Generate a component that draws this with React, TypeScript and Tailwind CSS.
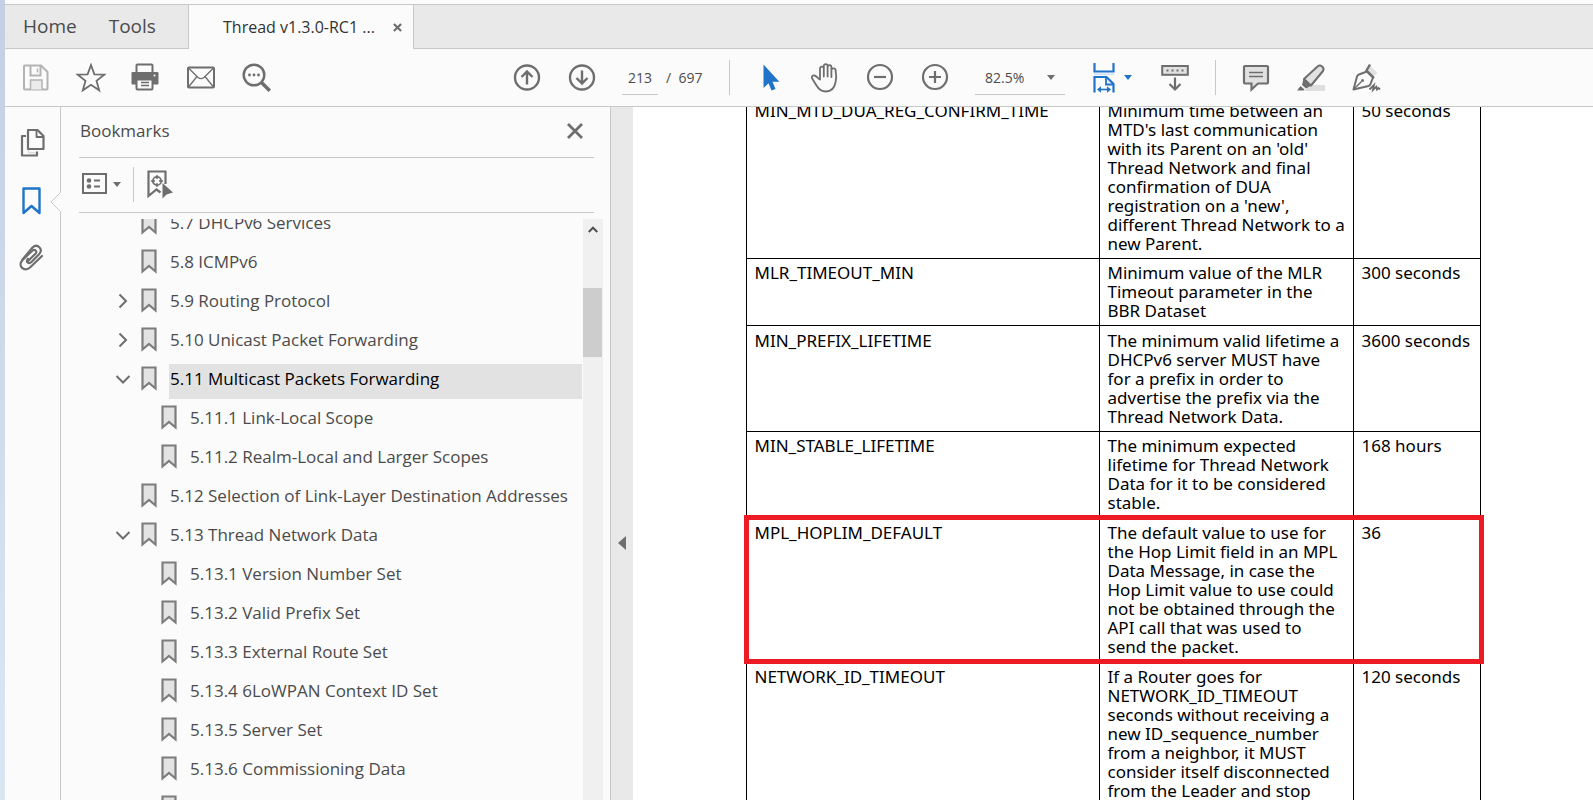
// PDF reader window: tab strip, main toolbar, bookmarks pane and one page of a spec table.

import type { ReactNode } from "react";

type Bookmark = {
  title: string;
  level: 1 | 2;
  state?: "open" | "closed";
  selected?: boolean;
};

const BOOKMARKS: Bookmark[] = [
  { title: "5.7 DHCPv6 Services", level: 1 },
  { title: "5.8 ICMPv6", level: 1 },
  { title: "5.9 Routing Protocol", level: 1, state: "closed" },
  { title: "5.10 Unicast Packet Forwarding", level: 1, state: "closed" },
  { title: "5.11 Multicast Packets Forwarding", level: 1, state: "open", selected: true },
  { title: "5.11.1 Link-Local Scope", level: 2 },
  { title: "5.11.2 Realm-Local and Larger Scopes", level: 2 },
  { title: "5.12 Selection of Link-Layer Destination Addresses", level: 1 },
  { title: "5.13 Thread Network Data", level: 1, state: "open" },
  { title: "5.13.1 Version Number Set", level: 2 },
  { title: "5.13.2 Valid Prefix Set", level: 2 },
  { title: "5.13.3 External Route Set", level: 2 },
  { title: "5.13.4 6LoWPAN Context ID Set", level: 2 },
  { title: "5.13.5 Server Set", level: 2 },
  { title: "5.13.6 Commissioning Data", level: 2 },
  { title: "", level: 2 },
];

type Constant = { name: string; text: string; value: string; marked?: boolean; roomy?: boolean };

// The descriptions keep the line breaks of the typeset page.
const CONSTANTS: Constant[] = [
  {
    name: "MIN_MTD_DUA_REG_CONFIRM_TIME",
    text: "Minimum time between an\nMTD's last communication\nwith its Parent on an 'old'\nThread Network and final\nconfirmation of DUA\nregistration on a 'new',\ndifferent Thread Network to a\nnew Parent.",
    value: "50 seconds",
  },
  {
    name: "MLR_TIMEOUT_MIN",
    text: "Minimum value of the MLR\nTimeout parameter in the\nBBR Dataset",
    value: "300 seconds",
  },
  {
    name: "MIN_PREFIX_LIFETIME",
    text: "The minimum valid lifetime a\nDHCPv6 server MUST have\nfor a prefix in order to\nadvertise the prefix via the\nThread Network Data.",
    value: "3600 seconds",
    roomy: true,
  },
  {
    name: "MIN_STABLE_LIFETIME",
    text: "The minimum expected\nlifetime for Thread Network\nData for it to be considered\nstable.",
    value: "168 hours",
  },
  {
    name: "MPL_HOPLIM_DEFAULT",
    text: "The default value to use for\nthe Hop Limit field in an MPL\nData Message, in case the\nHop Limit value to use could\nnot be obtained through the\nAPI call that was used to\nsend the packet.",
    value: "36",
    marked: true,
    roomy: true,
  },
  {
    name: "NETWORK_ID_TIMEOUT",
    text: "If a Router goes for\nNETWORK_ID_TIMEOUT\nseconds without receiving a\nnew ID_sequence_number\nfrom a neighbor, it MUST\nconsider itself disconnected\nfrom the Leader and stop",
    value: "120 seconds",
    roomy: true,
  },
];

function ToolButton({ label, children }: { label: string; children: ReactNode }) {
  return (
    <button type="button" aria-label={label} className="shrink-0 text-[#6e6e6e]">
      <svg width="30" height="30" viewBox="0 0 30 30" fill="none" stroke="currentColor" strokeWidth="2">
        {children}
      </svg>
    </button>
  );
}

function Divider() {
  return <div className="h-[35px] w-px shrink-0 bg-[#c8c8c8]" />;
}

function Caret({ className }: { className?: string }) {
  return (
    <svg width="8" height="5" viewBox="0 0 8 5" fill="currentColor" className={className}>
      <path d="M0 0h8L4 5z" />
    </svg>
  );
}

function TabStrip() {
  return (
    <div className="flex h-[45px] shrink-0 border-t border-[#c8c8c8] bg-[#e9e9e9] text-[#4b4b4b]">
      <div className="flex w-[183px] items-center gap-8 border-b border-[#c8c8c8] pl-[18px] text-[19px]">
        <button type="button">Home</button>
        <button type="button">Tools</button>
      </div>
      <div className="flex w-[226px] items-center justify-between border-x border-[#c8c8c8] bg-[#fbfbfb] pr-[11px] pl-[34px] text-base text-[#323232]">
        <button type="button" className="whitespace-nowrap">Thread v1.3.0-RC1 ...</button>
        <button type="button" aria-label="Close tab" className="text-[#6e6e6e]">
          <svg width="9" height="9" viewBox="0 0 10 10" stroke="currentColor" strokeWidth="2.400">
            <path d="M1 1l8 8M9 1L1 9" />
          </svg>
        </button>
      </div>
      <div className="flex-1 border-b border-[#c8c8c8]" />
    </div>
  );
}

function Toolbar() {
  return (
    <div className="flex h-[58px] shrink-0 items-center gap-[25px] border-b border-[#c8c8c8] bg-[#fbfbfb] pl-4 text-[#4b4b4b]">
      <ToolButton label="Save">
        <g stroke="#b3b3b3">
          <path d="M4 2.500h16l6.500 6.500v16.500a1 1 0 0 1-1 1H4a1 1 0 0 1-1-1v-22a1 1 0 0 1 1-1z" />
          <path d="M9.500 3v9.500h10V3" />
          <path d="M9.500 26.500V17h11.500v9.500" fill="#ececec" strokeWidth="1.500" />
          <path d="M16.500 5.500v4" strokeWidth="1.500" />
        </g>
      </ToolButton>
      <ToolButton label="Star">
        <path d="M15 2l3.400 9.300 9.900.4-7.800 6.100 2.700 9.500L15 21.800l-8.200 5.500 2.700-9.500-7.800-6.100 9.900-.4z" strokeWidth="1.800" />
      </ToolButton>
      <ToolButton label="Print">
        <path d="M5.500 10.500v-8a1 1 0 0 1 1-1h14a1 1 0 0 1 1 1v8" />
        <path d="M1.500 9h25a1 1 0 0 1 1 1v10.500a1 1 0 0 1-1 1h-25a1 1 0 0 1-1-1V10a1 1 0 0 1 1-1z" fill="currentColor" stroke="none" />
        <path d="M5.500 16.500h16v9a1 1 0 0 1-1 1h-14a1 1 0 0 1-1-1z" fill="#fbfbfb" />
        <path d="M10 19.500h8M10 22.500h8" strokeWidth="1.400" />
        <circle cx="23.500" cy="12.500" r="1" fill="#fbfbfb" stroke="none" />
      </ToolButton>
      <ToolButton label="Email">
        <rect x="2" y="4.500" width="26" height="20" rx="1" />
        <path d="M2.500 5L12 14.500q3 2.400 6 0L27.500 5M2.500 24L11 13.500M27.500 24L19 13.500" strokeWidth="1.300" />
      </ToolButton>
      <ToolButton label="Find text">
        <circle cx="13" cy="12" r="10.300" strokeWidth="2.400" />
        <path d="M20.500 19.500l8.300 8.300" strokeWidth="3.600" />
        <g fill="currentColor" stroke="none">
          <circle cx="8.500" cy="12" r="1.400" />
          <circle cx="13" cy="12" r="1.400" />
          <circle cx="17.500" cy="12" r="1.400" />
        </g>
      </ToolButton>

      <div className="ml-[216px] flex items-center gap-[25px]">
        <ToolButton label="Previous page">
          <circle cx="15" cy="14.500" r="12" strokeWidth="2.400" />
          <path d="M15 21.500V9M9.500 14L15 8.500l5.500 5.500" strokeWidth="2.400" />
        </ToolButton>
        <ToolButton label="Next page">
          <circle cx="15" cy="14.500" r="12" strokeWidth="2.400" />
          <path d="M15 7.500V20M9.500 15l5.500 5.500 5.500-5.500" strokeWidth="2.400" />
        </ToolButton>
        <div className="flex h-[35px] items-center text-[14px]">
          <input
            aria-label="Page number"
            defaultValue="213"
            className="h-full w-9 border-b border-[#c8c8c8] bg-transparent text-center outline-none"
          />
          <span className="w-[46px] pl-2 whitespace-pre">/  697</span>
        </div>
      </div>
      <Divider />
      <ToolButton label="Select">
        <path d="M8.500 1.500V25l5-4.800 3 7.300 4-1.600-3-7.200h6.800z" fill="#1f74c9" stroke="none" />
      </ToolButton>
      <ToolButton label="Hand">
        <path
          d="M10 16.500V5.500a1.900 1.900 0 0 1 3.800 0V13.500 3a1.900 1.900 0 0 1 3.800 0V13.500 4a1.900 1.900 0 0 1 3.800 0V14 7.500a2.100 2.100 0 0 1 4.200 0c.6 3 .7 8.500-.1 12-1.200 5.700-4.200 9-9.500 9-4.600 0-7.300-2.200-9.500-6L2 15.200c-.8-2.200 1-3.200 2.800-2.500 2.400 1 3 2.700 5.200 3.800z"
          strokeWidth="1.800"
          strokeLinejoin="round"
        />
      </ToolButton>
      <ToolButton label="Zoom out">
        <circle cx="15" cy="14" r="12" strokeWidth="2.200" />
        <path d="M9 14h12" strokeWidth="2.200" />
      </ToolButton>
      <ToolButton label="Zoom in">
        <circle cx="15" cy="14" r="12" strokeWidth="2.200" />
        <path d="M9 14h12M15 8v12" strokeWidth="2.200" />
      </ToolButton>
      <div className="relative h-[35px] w-[90px] shrink-0 border-b border-[#c8c8c8]">
        <select aria-label="Zoom level" className="h-full w-full appearance-none bg-transparent pl-[10px] text-[14px] outline-none">
          <option>82.5%</option>
        </select>
        <Caret className="pointer-events-none absolute top-[15px] right-[10px] text-[#6e6e6e]" />
      </div>
      <button type="button" aria-label="Fit width" className="flex w-[45px] shrink-0 items-center gap-1 text-[#1f74c9]">
        <svg width="30" height="30" viewBox="0 0 30 30" fill="none" stroke="currentColor" strokeWidth="2.200">
          <path d="M4.500 0v8.500h19V0M4.500 29.500V14h12l7 7v8.500" />
          <path d="M16 14v7.500h7.500" strokeWidth="1.800" />
          <path d="M4 11.200h20" stroke="#cfe0f3" strokeWidth="1.500" />
          <path d="M8 26.500h12" strokeWidth="1.600" />
          <path d="M7 26.500l4-3.200v6.400zM21 26.500l-4-3.200v6.400z" fill="currentColor" stroke="none" />
        </svg>
        <Caret />
      </button>
      <ToolButton label="Read mode">
        <rect x="2.200" y="3" width="25.600" height="8.800" fill="#e1e1e1" />
        <path d="M6.500 7.400h2M11.500 7.400h2M16.500 7.400h2M21.500 7.400h2" />
        <path d="M15 14.500V26M9.500 21l5.500 5.500 5.500-5.500" strokeWidth="2.200" />
      </ToolButton>
      <Divider />
      <ToolButton label="Comment">
        <path d="M4 3h22a1 1 0 0 1 1 1v15.500a1 1 0 0 1-1 1H17L10.500 26.500v-6H4a1 1 0 0 1-1-1V4a1 1 0 0 1 1-1z" fill="#e1e1e1" strokeWidth="2.200" />
        <path d="M8 9.500h14M8 13.500h14" strokeWidth="1.300" />
      </ToolButton>
      <ToolButton label="Highlight">
        <path d="M14 22h15v6H8z" fill="#dedede" stroke="none" />
        <path d="M8 16L21.500 3.500c3-2.500 7.500.8 5.500 4.500L15 22.500z" fill="#e1e1e1" strokeLinejoin="round" />
        <path d="M7.500 15.500l8 7-5.500 3-4-3.500zM4.500 23l4 3.500-1 1H1z" fill="currentColor" stroke="none" />
      </ToolButton>
      <ToolButton label="Sign">
        <path d="M2.500 26.500L6 13.500q.5-1.500 2-2L16 8.500l6 6-2.500 6.500q-.5 1.500-2 2z" fill="#fbfbfb" strokeLinejoin="round" />
        <path d="M16.500 7L19 2.500l7.500 7.500-4 3.500z" fill="#e1e1e1" stroke="none" />
        <path d="M19 1.500l-3.500 6 7.500 7.500" strokeWidth="2.400" />
        <path d="M3.500 25.500l7-7" strokeWidth="1.400" />
        <circle cx="11.500" cy="17.500" r="1.500" fill="currentColor" stroke="none" />
        <path d="M18.500 26.500l4.500-4.500-1 5 3.300-3.300.7 2.800 1.500-1.500 1.500 1.500" strokeWidth="1.800" />
      </ToolButton>
    </div>
  );
}

function NavRail() {
  return (
    <nav className="relative flex w-14 shrink-0 flex-col items-center gap-7 border-r border-[#c8c8c8] bg-[#fbfbfb] pt-5 text-[#6e6e6e]">
      <button type="button" aria-label="Page thumbnails">
        <svg width="30" height="30" viewBox="0 0 30 30" fill="none" stroke="currentColor" strokeWidth="2.200" strokeLinejoin="round">
          <path d="M8 9H4v19.500h15v-4" />
          <path d="M10.500 22.800v3H18" stroke="#dcdcdc" strokeWidth="1.500" />
          <path d="M10 3h9.500l6 6v13H10z" />
          <path d="M18.500 3.500V10H25" strokeWidth="1.800" />
        </svg>
      </button>
      <button type="button" aria-label="Bookmarks" aria-pressed="true" className="text-[#1f74c9]">
        <svg width="30" height="30" viewBox="0 0 30 30" fill="none" stroke="currentColor" strokeWidth="2.400" strokeLinejoin="round">
          <path d="M5.500 3.500h16v24.500L13.500 21l-8 7z" />
        </svg>
      </button>
      <button type="button" aria-label="Attachments">
        <svg width="30" height="30" viewBox="0 0 30 30" fill="none" stroke="currentColor" strokeWidth="2.200" strokeLinecap="round">
          <path d="M9.500 18.500l8-7.800c2.500-2.200-1-5.200-3.200-3L4.500 17c-5.500 6 2 12.500 7.500 7.500L24 13" />
          <path d="M4.500 16.500L14.500 4.500c5-4.500 11 1.500 6.800 6.500l-7.800 8c-3 2.500-6-.5-3.500-3.200" />
        </svg>
      </button>
      {/* notch that points at the open pane's button */}
      <svg width="11" height="20" viewBox="0 0 11 20" className="absolute top-[85px] -right-px">
        <path d="M11 0L1 10l10 10z" fill="#fbfbfb" />
        <path d="M10.500 .5L1 10l9.500 9.500" fill="none" stroke="#c8c8c8" />
      </svg>
    </nav>
  );
}

function Chevron({ open }: { open: boolean }) {
  return (
    <svg width="16" height="16" viewBox="0 0 16 16" fill="none" stroke="#6e6e6e" strokeWidth="2">
      <path d={open ? "M1.500 5L8 11.500 14.500 5" : "M4.500 1.500L11 8l-6.500 6.500"} />
    </svg>
  );
}

function BookmarkRow({ item }: { item: Bookmark }) {
  return (
    <li className={`flex h-[39px] items-start pt-1 ${item.level === 2 ? "pl-[74px]" : "pl-[54px]"}`}>
      <span className="flex h-[29px] w-[26px] shrink-0 items-center">
        {item.state && (
          <button type="button" aria-label={item.state === "open" ? "Collapse" : "Expand"}>
            <Chevron open={item.state === "open"} />
          </button>
        )}
      </span>
      <svg width="16" height="29" viewBox="0 0 16 29" fill="#e3e3e3" stroke="#7d7d7d" strokeWidth="2.200" className="mr-3 shrink-0">
        <path d="M1.500 3.500h13v21L8 19l-6.500 5.500z" />
      </svg>
      <a
        href="#page"
        className={`h-[35px] flex-1 pl-px leading-[29px] whitespace-nowrap ${item.selected ? "bg-[#e2e2e2] text-black" : ""}`}
      >
        {item.title}
      </a>
    </li>
  );
}

function BookmarksPane() {
  return (
    <section className="flex w-[550px] shrink-0 flex-col border-r border-[#c8c8c8] bg-[#fbfbfb] text-[17px] text-[#4b4b4b]">
      <header className="mr-4 ml-[18px] flex h-[51px] items-center justify-between border-b border-[#c8c8c8] pr-[11px] pb-0.5 pl-px">
        <h2>Bookmarks</h2>
        <button type="button" aria-label="Close pane" className="text-[#6e6e6e]">
          <svg width="16" height="16" viewBox="0 0 16 16" stroke="currentColor" strokeWidth="2.800">
            <path d="M1 1l14 14M15 1L1 15" />
          </svg>
        </button>
      </header>
      <div className="mr-4 ml-[18px] flex h-[55px] shrink-0 items-center border-b border-[#c8c8c8] pb-0.5 text-[#6e6e6e]">
        <button type="button" aria-label="Options" className="flex items-center gap-[6px] pl-[3px]">
          <svg width="25" height="22" viewBox="0 0 25 22" fill="none" stroke="currentColor" strokeWidth="2">
            <rect x="1" y="1" width="23" height="19" />
            <path d="M12 7.500h6M12 13.500h6" />
            <circle cx="7" cy="7.500" r="2.300" fill="currentColor" stroke="none" />
            <circle cx="7" cy="13.500" r="2.300" fill="currentColor" stroke="none" />
          </svg>
          <Caret />
        </button>
        <div className="mx-3">
          <Divider />
        </div>
        <button type="button" aria-label="Go to current bookmark">
          <svg width="28" height="30" viewBox="0 0 28 30" fill="none" stroke="currentColor" strokeWidth="2.200">
            <path d="M19.500 15V2.500h-17v24.500l8-6.500 4 3" />
            <circle cx="11" cy="12" r="4.200" strokeWidth="1.700" />
            <path d="M11 6v4M11 14v4M5 12h4M13 12h4" strokeWidth="1.400" />
            <path d="M16.500 14v15.500l4-4 6.500-2z" fill="currentColor" stroke="none" />
          </svg>
        </button>
      </div>
      <div className="mt-[6px] mr-[7px] flex min-h-0 flex-1">
        <div className="mr-px flex-1 overflow-hidden">
          <ul className="-mt-[15px]">
            {BOOKMARKS.map((item, i) => (
              <BookmarkRow key={i} item={item} />
            ))}
          </ul>
        </div>
        <div className="w-5 bg-[#f0f0f0] pr-px">
          <div className="flex h-[69px] justify-center pt-[7px]">
            <svg width="10" height="7" viewBox="0 0 10 7" fill="none" stroke="#505050" strokeWidth="2">
              <path d="M.7 6L5 1.700 9.300 6" />
            </svg>
          </div>
          <div className="h-[69px] bg-[#cdcdcd]" />
        </div>
      </div>
    </section>
  );
}

function ConstantsTable() {
  return (
    <table className="mx-auto -mt-[11px] w-[735px] table-fixed border-collapse font-['Noto_Sans',sans-serif] text-[17px] leading-[19px] text-black">
      <colgroup>
        <col className="w-[353px]" />
        <col className="w-[254px]" />
        <col />
      </colgroup>
      <tbody className="align-top whitespace-pre">
        {CONSTANTS.map((row) => {
          const cell = `border border-black pb-[5px] pl-2 ${row.roomy ? "pt-[5px]" : "pt-1"}`;
          return (
            <tr key={row.name} className="relative">
              <td className={cell}>
                {row.name}
                {row.marked && <span className="absolute -top-[3px] -right-1 -bottom-0.5 -left-0.5 border-5 border-[#ed1c24]" />}
              </td>
              <td className={cell}>{row.text}</td>
              <td className={cell}>{row.value}</td>
            </tr>
          );
        })}
      </tbody>
    </table>
  );
}

export default function App() {
  return (
    <div className="flex h-screen overflow-hidden bg-[#fbfbfb] font-['Open_Sans',sans-serif]">
      <div className="w-[5px] shrink-0 bg-linear-to-b from-[#c5cfe3] to-[#dce6f3]" />
      <div className="flex min-w-0 flex-1 flex-col pt-1">
        <TabStrip />
        <Toolbar />
        <div className="flex min-h-0 flex-1">
          <NavRail />
          <BookmarksPane />
          <button
            type="button"
            aria-label="Collapse pane"
            className="flex w-[22px] shrink-0 items-center justify-center bg-[#e9e9e9] pt-[178px] text-[#6e6e6e]"
          >
            <svg width="8" height="14" viewBox="0 0 8 14" fill="currentColor">
              <path d="M8 0v14L0 7z" />
            </svg>
          </button>
          <main id="page" className="min-w-0 flex-1 overflow-hidden bg-white">
            <ConstantsTable />
          </main>
        </div>
      </div>
    </div>
  );
}
